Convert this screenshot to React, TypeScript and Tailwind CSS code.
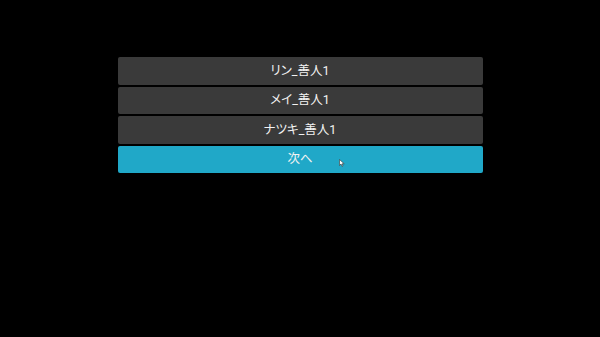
const names = ['リン_善人1', 'メイ_善人1', 'ナツキ_善人1'];

export default function App() {
  return (
    <div
      className="w-[600px] h-[337px] bg-black overflow-hidden"
      style={{ fontFamily: 'Roboto, "Noto Sans CJK JP", sans-serif' }}
    >
      <div className="w-[365px] mx-auto pt-[57px] flex flex-col gap-[2px]">
        {names.map((n) => (
          <div
            key={n}
            className="h-[27.5px] pt-px bg-[#3a3a3a] rounded-[2px] flex items-center justify-center text-[#f2f2f2] text-[12.5px] [font-feature-settings:'palt']"
          >
            {n}
          </div>
        ))}
        <div className="relative h-[27.5px] pt-px bg-[#20a8c8] rounded-[2px] flex items-center justify-center text-[#f2f2f2] text-[12.5px] [font-feature-settings:'palt']">
          次へ
          <svg className="absolute left-[221px] top-[13px]" width="6" height="8" viewBox="0 0 6 8">
            <path d="M0.5 0.5 L0.5 6.5 L2 5 L3.2 7.5 L4 7 L3 4.8 L5.2 4.8 Z" fill="#fff" stroke="#333" strokeWidth="0.6" />
          </svg>
        </div>
      </div>
    </div>
  );
}
